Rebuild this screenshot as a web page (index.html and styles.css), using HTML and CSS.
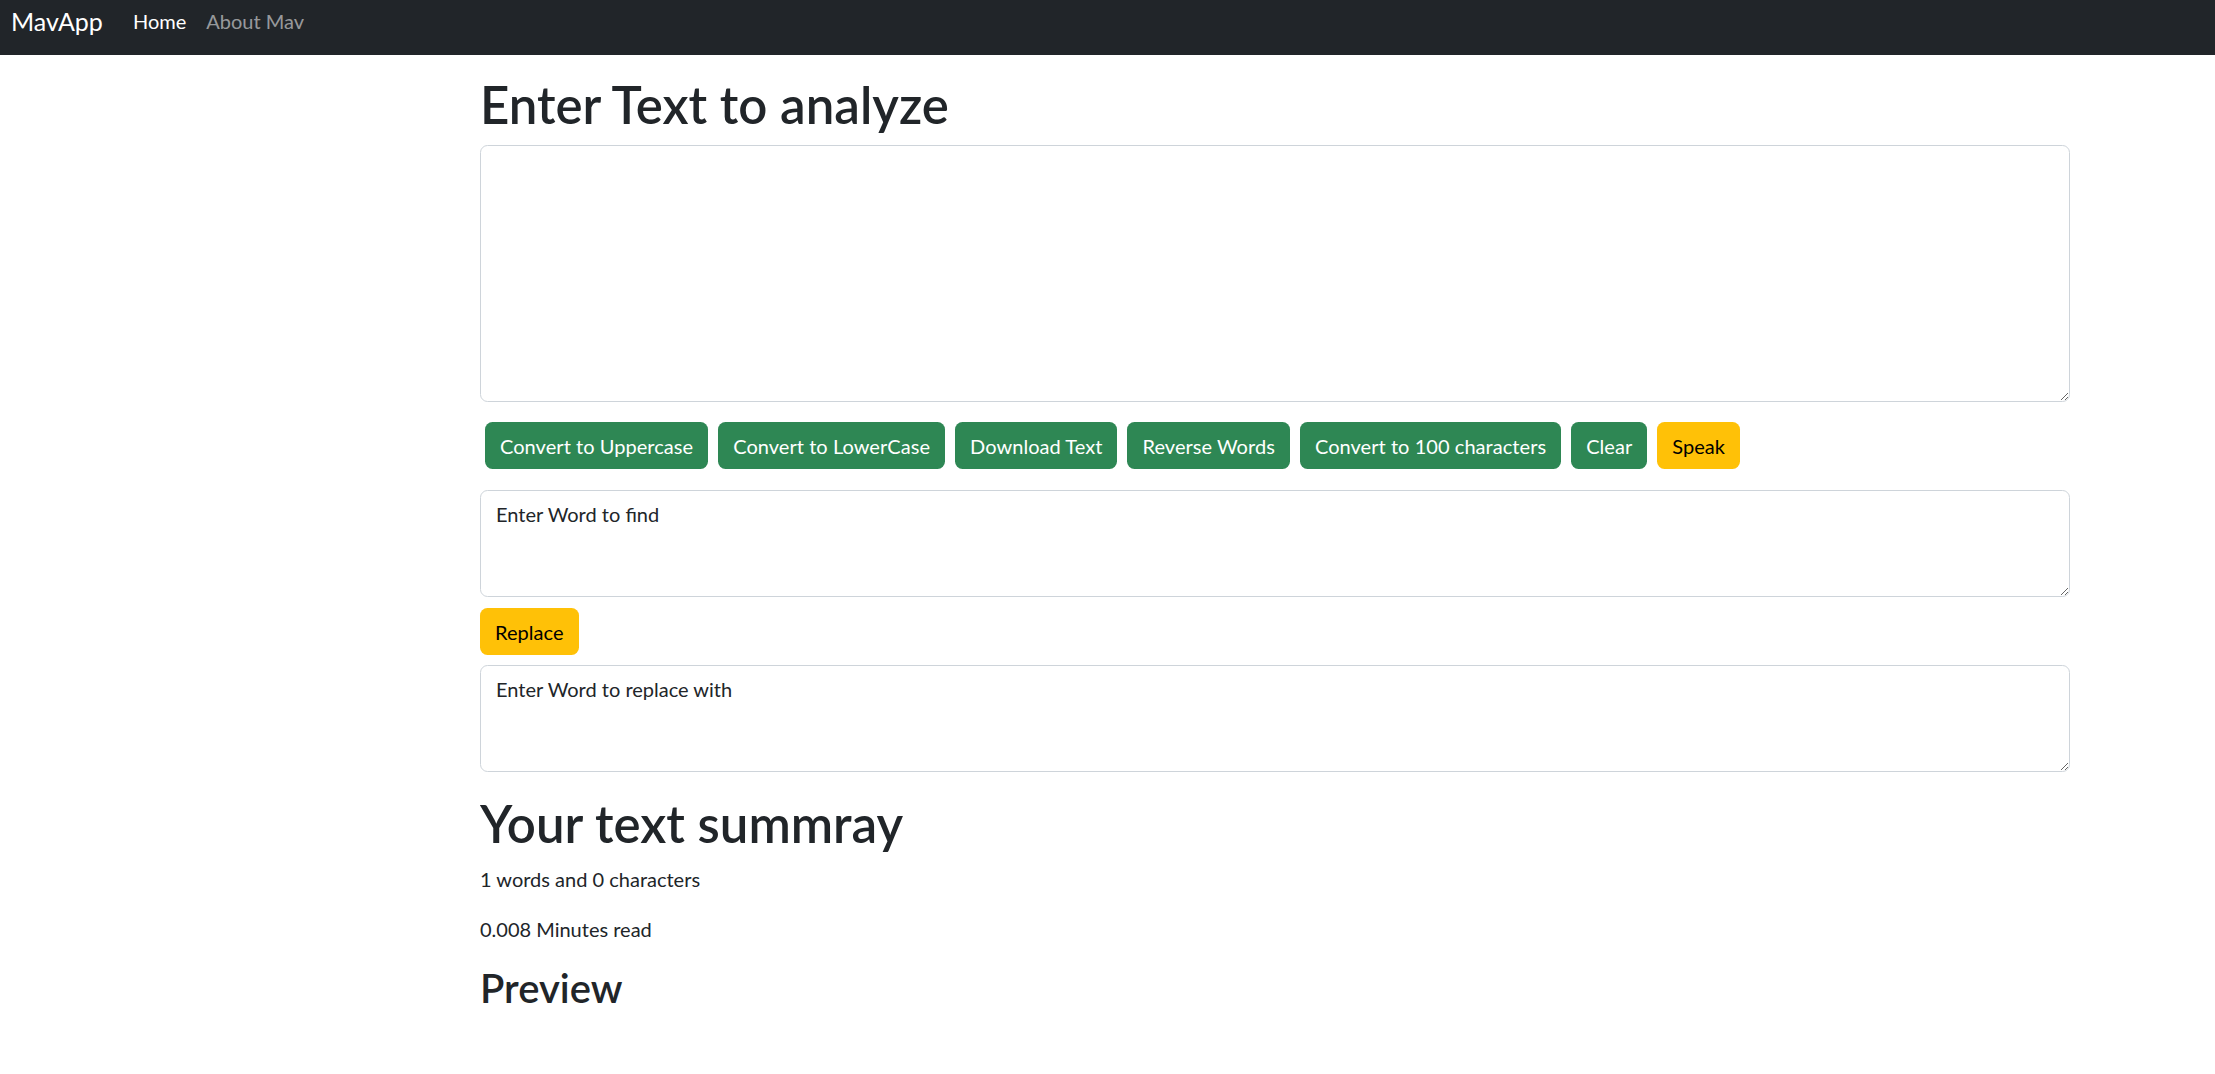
FILE: index.html
```html
<!DOCTYPE html>
<html lang="en">
<head>
    <meta charset="UTF-8">
    <meta name="viewport" content="width=device-width, initial-scale=1.0">
    <title>MavApp</title>
    <link rel="stylesheet" href="styles.css">
</head>
<body>

<!-- Navbar -->
<nav class="navbar">
    <a class="brand" href="#">MavApp</a>
    <ul class="nav-links">
        <li><a class="nav-link active" href="#">Home</a></li>
        <li><a class="nav-link" href="#">About Mav</a></li>
    </ul>
</nav>

<div class="container">
    <h1>Enter Text to analyze</h1>
    <textarea class="form-control" id="my-box" rows="8"></textarea>

    <div class="btn-row">
        <button class="btn btn-green">Convert to Uppercase</button>
        <button class="btn btn-green">Convert to LowerCase</button>
        <button class="btn btn-green">Download Text</button>
        <button class="btn btn-green">Reverse Words</button>
        <button class="btn btn-green">Convert to 100 characters</button>
        <button class="btn btn-green">Clear</button>
        <button class="btn btn-yellow">Speak</button>
    </div>

    <textarea class="form-control small-box" id="find-box" rows="3">Enter Word to find</textarea>
    <button class="btn btn-yellow replace-btn">Replace</button>
    <textarea class="form-control small-box" id="replace-box" rows="3">Enter Word to replace with</textarea>

    <!-- Summary -->
    <h1 class="summary-title">Your text summray</h1>
    <p>1 words and 0 characters</p>
    <p>0.008 Minutes read</p>
    <h2>Preview</h2>
</div>

</body>
</html>
```
FILE: styles.css
```css
/* General Reset */
* {
    margin: 0;
    padding: 0;
    box-sizing: border-box;
}

body {
    font-family: Lato, "Open Sans", sans-serif;
    font-size: 20px;
    line-height: 1.5;
    color: #212529;
    background-color: #fff;
}

/* Navbar */
.navbar {
    display: flex;
    align-items: flex-start;
    height: 55px;
    background-color: #212529;
    padding-left: 11px;
}

.brand {
    display: block;
    width: 112px;
    font-size: 25px;
    line-height: 42px;
    color: #fff;
    text-decoration: none;
}

.nav-links {
    display: flex;
    list-style: none;
}

.nav-link {
    display: block;
    padding: 0 10px;
    line-height: 42px;
    color: rgba(255, 255, 255, 0.55);
    text-decoration: none;
}

.nav-link.active {
    color: #fff;
}

/* Main Container */
.container {
    width: 1590px;
    margin: 20px 0 0 480px;
}

h1 {
    font-size: 51px;
    font-weight: 600;
    line-height: 60px;
    margin-bottom: 10px;
}

h2 {
    font-size: 40px;
    font-weight: 600;
    line-height: 48px;
}

p {
    margin-bottom: 20px;
}

.form-control {
    display: block;
    width: 100%;
    height: 257px;
    padding: 7.5px 15px;
    font-family: inherit;
    font-size: 20px;
    line-height: 1.5;
    color: #212529;
    border: 1px solid #ced4da;
    border-radius: 7.5px;
    margin-bottom: 20px;
}

.small-box {
    height: 107px;
    margin-bottom: 0;
}

/* Buttons */
.btn-row {
    display: flex;
    gap: 10px;
    padding-left: 5px;
    margin-bottom: 21px;
}

.btn {
    height: 47px;
    padding: 0 15px;
    font-family: inherit;
    font-size: 20px;
    letter-spacing: 0.05px;
    border: none;
    border-radius: 7.5px;
    cursor: pointer;
}

.btn-green {
    background-color: #2e8754;
    color: #fff;
}

.btn-yellow {
    background-color: #ffc107;
    color: #000;
}

.replace-btn {
    display: block;
    margin: 11px 0 10px;
}

.summary-title {
    margin-top: 22px;
}
```
